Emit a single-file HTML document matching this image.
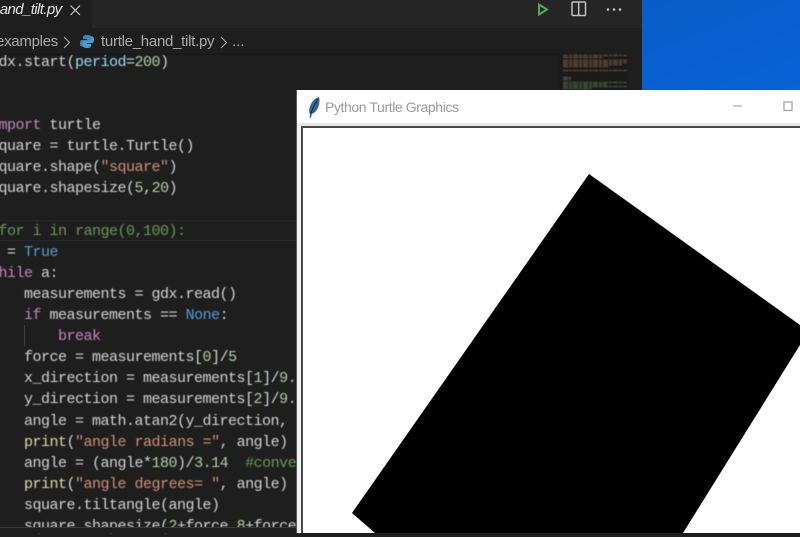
<!DOCTYPE html>
<html><head><meta charset="utf-8"><style>
html,body{margin:0;padding:0;width:800px;height:533px;overflow:hidden;background:#1e1e1e}
.a{position:absolute}
#code{left:-10px;top:1px;font:15px/21.1px "Liberation Mono",monospace;letter-spacing:-.5px;color:#d4d4d4;white-space:pre;filter:blur(.4px)}
#code div{position:absolute;left:0}
.k{color:#c586c0}.b{color:#569cd6}.s{color:#ce9178}.n{color:#b5cea8}.f{color:#dcdcaa}.v{color:#9cdcfe}.c{color:#6a9955}
.ui{font-family:"Liberation Sans",sans-serif;white-space:pre;filter:blur(.35px)}
</style></head><body>
<div class="a" style="left:642px;top:0;width:158px;height:90px;background:linear-gradient(160deg,#0a5cc9,#0763d6)"></div>
<div class="a" style="left:0;top:0;width:642px;height:28px;background:#252526"></div>
<div class="a" style="left:0;top:0;width:92px;height:28px;background:#1e1e1e"></div>
<div class="a" style="left:0;top:28px;width:642px;height:25px;background:#1e1e1e"></div>
<div class="a" style="left:0;top:53px;width:558px;height:4px;background:linear-gradient(#171717,#1e1e1e)"></div>
<div class="a ui" style="left:-8px;top:0;font-size:15px;letter-spacing:-.6px;line-height:20px;font-style:italic;color:#e4e4e4">hand_tilt.py</div>
<svg class="a" style="left:0;top:0" width="642" height="90" fill="none">
<path d="M70.500 5.500l9.500 9.500M80 5.500l-9.500 9.500" stroke="#c8c8c8" stroke-width="1.200"/>
<path d="M64 37l5.500 5.500-5.500 5.500" stroke="#aaa" stroke-width="1.100"/>
<path d="M221 37l5.500 5.500-5.500 5.500" stroke="#aaa" stroke-width="1.100"/>
<path d="M87 35c-3 0-4 1-4 2.500V39h4v1h-5c-1.500 0-2 1.500-2 3.500s.7 3 2 3h1.500v-2c0-1.500 1-2.500 2.500-2.500h3.500c1 0 2-1 2-2v-2.500C92 36 90 35 87 35z" fill="#3b87bd"/>
<path d="M87 48c3 0 4-1 4-2.500V44h-4v-1h5c1.500 0 2-1.500 2-3.500s-.7-3-2-3h-1.500v2c0 1.500-1 2.500-2.500 2.500h-3.500c-1 0-2 1-2 2v2.500c0 1.500 2 2.500 5 2.500z" fill="#4d9ccf"/>
<path d="M539 4.500l8 5-8 5z" stroke="#57a85c" stroke-width="2"/>
<rect x="572" y="2" width="13.500" height="13.500" rx="1" stroke="#c0c0c0" stroke-width="1.500"/>
<path d="M578.700 2v13" stroke="#c0c0c0" stroke-width="1.500"/>
<circle cx="608" cy="9.500" r="1.300" fill="#c5c5c5"/><circle cx="614" cy="9.500" r="1.300" fill="#c5c5c5"/><circle cx="620" cy="9.500" r="1.300" fill="#c5c5c5"/>
<rect x="558" y="53" width="70" height="37" fill="#1a1a1a"/>
<g style="filter:blur(.7px)" stroke-width="1" stroke-dasharray="5 1 3 1" opacity=".8">
<path d="M563 55.500h64M563 57.500h40M563 60.500h64M563 62.500h64M563 64.500h60M563 66.500h45" stroke="#9d6f55"/>
<path d="M563 70.500h64" stroke="#9a6c52"/>
<path d="M563 77.500h8M563 79.500h8" stroke="#9078a0"/>
<path d="M563 82.500h64M563 84.500h44M563 86.500h64M563 88.500h30" stroke="#5f8a50"/>
</g>
<rect x="628" y="53" width="14" height="37" fill="#1e1e1e"/>
</svg>
<div class="a ui" style="left:-4px;top:32px;font-size:15px;letter-spacing:-.27px;line-height:20px;color:#a9a9a9">examples</div>
<div class="a ui" style="left:101px;top:32px;font-size:15px;letter-spacing:-.27px;line-height:20px;color:#a9a9a9">turtle_hand_tilt.py</div>
<div class="a ui" style="left:232px;top:32px;font-size:15px;line-height:20px;color:#a9a9a9">...</div>
<div class="a" style="left:0;top:220px;width:297px;height:19px;border-top:1px solid #282828;border-bottom:1px solid #282828"></div>
<div class="a" style="left:24px;top:325px;width:1px;height:21px;background:#404040"></div>
<div id="code" class="a">
<div style="top:51px">gdx.start(<span class="v">period</span>=<span class="n">200</span>)</div>
<div style="top:114px"><span class="k">import</span> turtle</div>
<div style="top:135px">square = turtle.Turtle()</div>
<div style="top:156px">square.shape(<span class="s">"square"</span>)</div>
<div style="top:177px">square.shapesize(<span class="n">5</span>,<span class="n">20</span>)</div>
<div style="top:220px" class="c">#for i in range(0,100):</div>
<div style="top:241px">a = <span class="b">True</span></div>
<div style="top:262px"><span class="k">while</span> a:</div>
<div style="top:283px">    measurements = gdx.read()</div>
<div style="top:304px">    <span class="k">if</span> measurements == <span class="b">None</span>:</div>
<div style="top:325px">        <span class="k">break</span></div>
<div style="top:346px">    force = measurements[<span class="n">0</span>]/<span class="n">5</span></div>
<div style="top:367px">    x_direction = measurements[<span class="n">1</span>]/<span class="n">9.8</span></div>
<div style="top:388px">    y_direction = measurements[<span class="n">2</span>]/<span class="n">9.8</span></div>
<div style="top:410px">    angle = math.atan2(y_direction, x_direction)</div>
<div style="top:431px">    <span class="f">print</span>(<span class="s">"angle radians ="</span>, angle)</div>
<div style="top:452px">    angle = (angle*<span class="n">180</span>)/<span class="n">3.14</span>  <span class="c">#convert</span></div>
<div style="top:473px">    <span class="f">print</span>(<span class="s">"angle degrees= "</span>, angle)</div>
<div style="top:494px">    square.tiltangle(angle)</div>
<div style="top:515px">    square.shapesize(<span class="n">2</span>+force,<span class="n">8</span>+force)</div>
</div>
<div class="a" style="left:0;top:527px;width:297px;height:6px;background:#1e1e1e;border-top:1px solid #3a3a3a;box-sizing:border-box"></div>
<div class="a" style="left:296px;top:90px;width:504px;height:443px;background:#fff;border-left:1px solid #55585a;box-sizing:border-box"></div>
<div class="a" style="left:297px;top:123px;width:503px;height:3px;background:#e6e6e6"></div>
<div class="a" style="left:297px;top:126px;width:4px;height:407px;background:#f0f0f0"></div>
<div class="a" style="left:301px;top:126px;width:499px;height:407px;border-left:2px solid #4a4a4a;border-top:2px solid #4a4a4a;box-sizing:border-box;background:#fff"></div>
<svg class="a" style="left:297px;top:90px" width="503" height="443" fill="none">
<path d="M22 7c-4 1-8 5-9.500 11-.6 3-.2 5 .5 6l-.5 3.500 1.500 .5.800-4c3-1 6-4 7.200-9 .7-3 .7-6 0-8z" fill="#33689e"/>
<path d="M21 9c-3 4-5 9-7.500 15" stroke="#16202c" stroke-width="1"/>
<path d="M436 16h9" stroke="#a8a8a8" stroke-width="1.200"/>
<rect x="487" y="12" width="8" height="8.500" stroke="#a0a0a0" stroke-width="1.200"/>
<path d="M292 84L503 235V255L386 443H78L55 423z" fill="#000"/>
</svg>
<div class="a ui" style="left:325px;top:98px;font-size:14px;letter-spacing:-.4px;line-height:18px;color:#9a9a9a">Python Turtle Graphics</div>
</body></html>
